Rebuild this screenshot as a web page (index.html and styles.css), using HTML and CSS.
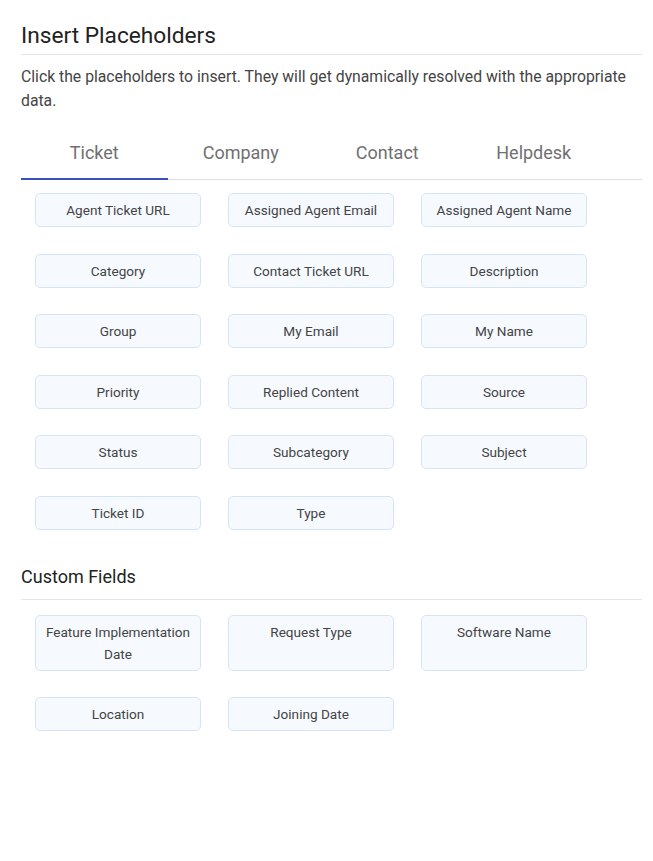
FILE: index.html
```html
<!DOCTYPE html>
<html>
<head>
<meta charset="utf-8">
<link rel="stylesheet" href="styles.css">
</head>
<body>
<div class="panel">
  <h1 class="title">Insert Placeholders</h1>
  <p class="desc">Click the placeholders to insert. They will get dynamically resolved with the appropriate data.</p>
  <div class="tabs">
    <div class="tab active">Ticket</div>
    <div class="tab">Company</div>
    <div class="tab">Contact</div>
    <div class="tab">Helpdesk</div>
  </div>
  <div class="chips">
    <div class="chip">Agent Ticket URL</div>
    <div class="chip">Assigned Agent Email</div>
    <div class="chip">Assigned Agent Name</div>
    <div class="chip">Category</div>
    <div class="chip">Contact Ticket URL</div>
    <div class="chip">Description</div>
    <div class="chip">Group</div>
    <div class="chip">My Email</div>
    <div class="chip">My Name</div>
    <div class="chip">Priority</div>
    <div class="chip">Replied Content</div>
    <div class="chip">Source</div>
    <div class="chip">Status</div>
    <div class="chip">Subcategory</div>
    <div class="chip">Subject</div>
    <div class="chip">Ticket ID</div>
    <div class="chip">Type</div>
  </div>
  <h2 class="subtitle">Custom Fields</h2>
  <div class="chips custom">
    <div class="chip">Feature Implementation Date</div>
    <div class="chip">Request Type</div>
    <div class="chip">Software Name</div>
    <div class="chip">Location</div>
    <div class="chip">Joining Date</div>
  </div>
</div>
</body>
</html>
```
FILE: styles.css
```css
html, body {
  margin: 0;
  padding: 0;
  background: #ffffff;
}
body {
  font-family: Roboto, "Noto Sans", sans-serif;
  color: #333;
}
.panel {
  width: 621px;
  margin-left: 21px;
  padding-top: 20px;
}
.title {
  margin: 0;
  font-size: 22.7px;
  font-weight: 400;
  line-height: 32px;
  color: #222;
  padding-bottom: 2px;
  border-bottom: 1px solid #e3e5ee;
}
.desc {
  margin: 10px 0 0 0;
  font-size: 15.75px;
  line-height: 24px;
  color: #444;
}
.tabs {
  display: flex;
  margin-top: 16px;
  border-bottom: 1px solid #dcdde3;
}
.tab {
  width: 146.5px;
  text-align: center;
  font-size: 18px;
  line-height: 24px;
  color: #707070;
  padding: 12px 0 13px 0;
  border-bottom: 2px solid transparent;
  margin-bottom: -1px;
}
.tab.active {
  border-bottom-color: #3a4ec0;
}
.chips {
  display: grid;
  grid-template-columns: repeat(3, 166px);
  column-gap: 27px;
  row-gap: 26.5px;
  padding-left: 14px;
  margin-top: 13px;
}
.chip {
  border: 1px solid #d6e5f5;
  background: #f6faff;
  border-radius: 5px;
  padding: 5px 6px;
  font-size: 13.6px;
  line-height: 22px;
  color: #444;
  text-align: center;
}
.subtitle {
  margin: 34px 0 0 0;
  font-size: 18px;
  font-weight: 400;
  line-height: 26px;
  color: #222;
  padding-bottom: 9px;
  border-bottom: 1px solid #e3e5ee;
}
.custom {
  margin-top: 15px;
}
```
